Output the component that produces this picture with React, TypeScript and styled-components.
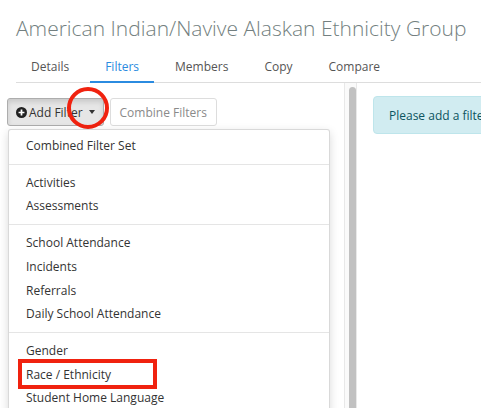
import styled, { createGlobalStyle } from 'styled-components'

const GlobalStyle = createGlobalStyle`
  html, body {
    margin: 0;
    padding: 0;
    background: #fff;
    overflow: hidden;
  }
  body {
    font-family: 'Open Sans', 'Noto Sans', sans-serif;
    color: #333;
  }
`

const tabs = ['Details', 'Filters', 'Members', 'Copy', 'Compare']

const menuGroups = [
  ['Combined Filter Set'],
  ['Activities', 'Assessments'],
  ['School Attendance', 'Incidents', 'Referrals', 'Daily School Attendance'],
  ['Gender', 'Race / Ethnicity', 'Student Home Language'],
]

const App = () => {
  return (
    <Page>
      <GlobalStyle />
      <Header>
        <Title>American Indian/Navive Alaskan Ethnicity Group</Title>
        <TabBar>
          {tabs.map((t) => (
            <Tab key={t} $active={t === 'Filters'}>
              {t}
            </Tab>
          ))}
        </TabBar>
      </Header>
      <Body>
        <LeftPane>
          <ButtonRow>
            <AddButton>
              <svg width="11" height="11" viewBox="0 0 12 12">
                <circle cx="6" cy="6" r="6" fill="#222" />
                <path d="M6 2.8v6.4M2.8 6h6.4" stroke="#fff" strokeWidth="1.9" />
              </svg>
              Add Filter
              <Caret />
            </AddButton>
            <PlainButton>Combine Filters</PlainButton>
            <CircleMark />
          </ButtonRow>
          <Menu>
            {menuGroups.map((group, gi) => (
              <MenuGroup key={gi}>
                {group.map((item) => (
                  <MenuItem key={item} $marked={item === 'Race / Ethnicity'}>
                    {item}
                  </MenuItem>
                ))}
              </MenuGroup>
            ))}
          </Menu>
        </LeftPane>
        <ScrollTrack>
          <Thumb />
        </ScrollTrack>
        <RightPane>
          <Alert>Please add a filter to get started.</Alert>
        </RightPane>
      </Body>
    </Page>
  )
}

const Page = styled.div`
  width: 481px;
  height: 408px;
  overflow: hidden;
  display: flex;
  flex-direction: column;
`

const Header = styled.div`
  padding: 13px 0 0 16px;
`

const Title = styled.h1`
  margin: 0 0 15px;
  font-size: 21px;
  font-weight: 300;
  line-height: 30px;
  color: #737f80;
  white-space: nowrap;
`

const TabBar = styled.div`
  display: flex;
  border-bottom: 1px solid #ddd;
`

const Tab = styled.div<{ $active?: boolean }>`
  padding: 0 15px 5px;
  margin: 0 6px -1px 0;
  font-size: 12px;
  line-height: 18px;
  color: ${(p) => (p.$active ? '#2b8be0' : '#555')};
  border-bottom: 2px solid ${(p) => (p.$active ? '#2b8be0' : 'transparent')};
`

const Body = styled.div`
  flex: 1;
  display: flex;
  min-height: 0;
`

const LeftPane = styled.div`
  position: relative;
  width: 344px;
  padding: 15px 0 0 7px;
  box-sizing: border-box;
`

const ButtonRow = styled.div`
  position: relative;
  display: flex;
  gap: 6px;
`

const AddButton = styled.button`
  display: flex;
  align-items: center;
  gap: 2px;
  height: 28px;
  padding: 0 8px;
  font-family: inherit;
  font-size: 12px;
  color: #333;
  background: #e6e6e6;
  border: 1px solid #adadad;
  border-radius: 3px;
  box-shadow: inset 0 3px 5px rgba(0, 0, 0, 0.125);
`

const Caret = styled.span`
  margin-left: 4px;
  width: 0;
  height: 0;
  border-left: 3.5px solid transparent;
  border-right: 3.5px solid transparent;
  border-top: 4px solid #333;
`

const PlainButton = styled.button`
  height: 28px;
  padding: 0 9px;
  font-family: inherit;
  font-size: 12px;
  color: #8a8a8a;
  background: #fff;
  border: 1px solid #ddd;
  border-radius: 3px;
`

const CircleMark = styled.div`
  position: absolute;
  left: 60px;
  top: -11px;
  width: 34px;
  height: 34px;
  border: 4px solid #f0220f;
  border-radius: 50%;
  pointer-events: none;
`

const Menu = styled.div`
  position: absolute;
  left: 8px;
  top: 46px;
  width: 322px;
  padding: 4px 0;
  background: #fff;
  border: 1px solid rgba(0, 0, 0, 0.15);
  border-radius: 3px;
  box-shadow: 0 3px 10px rgba(0, 0, 0, 0.15);
  box-sizing: border-box;
`

const MenuGroup = styled.div`
  & + & {
    border-top: 1px solid #e5e5e5;
    margin-top: 6px;
    padding-top: 6px;
  }
`

const MenuItem = styled.div<{ $marked?: boolean }>`
  position: relative;
  padding: 0 17px;
  font-size: 12px;
  line-height: 23.7px;
  color: #333;
  white-space: nowrap;

  ${(p) =>
    p.$marked &&
    `
    &::after {
      content: '';
      position: absolute;
      left: 9px;
      top: -4px;
      width: 131px;
      height: 22px;
      border: 4px solid #f0220f;
    }
  `}
`

const ScrollTrack = styled.div`
  width: 13px;
  border-left: 1px solid #e8e8e8;
  border-right: 1px solid #e8e8e8;
  background: #fafafa;
  padding: 4px 0 0 4px;
  box-sizing: border-box;
`

const Thumb = styled.div`
  width: 7px;
  height: 100%;
  background: #c1c1c1;
  border-radius: 4px 4px 0 0;
`

const RightPane = styled.div`
  flex: 1;
  padding: 13px 0 0 16px;
  overflow: hidden;
`

const Alert = styled.div`
  height: 38px;
  box-sizing: border-box;
  padding: 0 15px;
  display: flex;
  align-items: center;
  width: 300px;
  font-size: 12px;
  color: #0c5460;
  background: #d1ecf1;
  border: 1px solid #bee5eb;
  border-radius: 4px;
  white-space: nowrap;
`

export default App
